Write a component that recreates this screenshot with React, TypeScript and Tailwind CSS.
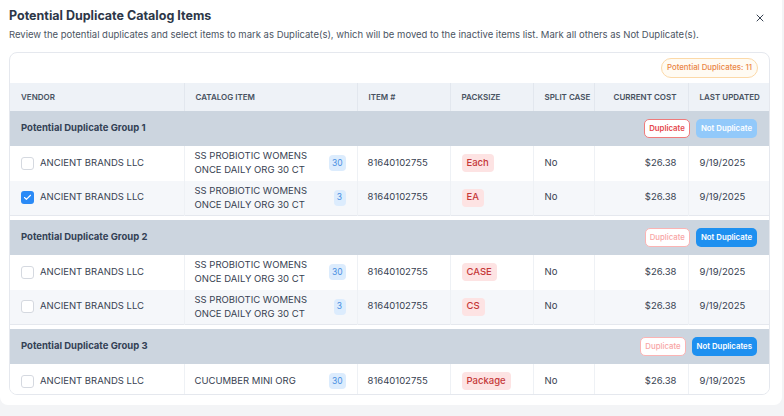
import { Check, X } from "lucide-react";

type Row = {
  vendor: string;
  item: string[];
  count: string;
  itemNo: string;
  pack: string;
  split: string;
  cost: string;
  updated: string;
  checked?: boolean;
};

type Group = {
  name: string;
  dupStyle: "active" | "faded";
  notDupStyle: "faded" | "active";
  notDupLabel: string;
  rows: Row[];
};

const probiotic = ["SS PROBIOTIC WOMENS", "ONCE DAILY ORG 30 CT"];

const groups: Group[] = [
  {
    name: "Potential Duplicate Group 1",
    dupStyle: "active",
    notDupStyle: "faded",
    notDupLabel: "Not Duplicate",
    rows: [
      { vendor: "ANCIENT BRANDS LLC", item: probiotic, count: "30", itemNo: "81640102755", pack: "Each", split: "No", cost: "$26.38", updated: "9/19/2025" },
      { vendor: "ANCIENT BRANDS LLC", item: probiotic, count: "3", itemNo: "81640102755", pack: "EA", split: "No", cost: "$26.38", updated: "9/19/2025", checked: true },
    ],
  },
  {
    name: "Potential Duplicate Group 2",
    dupStyle: "faded",
    notDupStyle: "active",
    notDupLabel: "Not Duplicate",
    rows: [
      { vendor: "ANCIENT BRANDS LLC", item: probiotic, count: "30", itemNo: "81640102755", pack: "CASE", split: "No", cost: "$26.38", updated: "9/19/2025" },
      { vendor: "ANCIENT BRANDS LLC", item: probiotic, count: "3", itemNo: "81640102755", pack: "CS", split: "No", cost: "$26.38", updated: "9/19/2025" },
    ],
  },
  {
    name: "Potential Duplicate Group 3",
    dupStyle: "faded",
    notDupStyle: "active",
    notDupLabel: "Not Duplicates",
    rows: [
      { vendor: "ANCIENT BRANDS LLC", item: ["CUCUMBER MINI ORG"], count: "30", itemNo: "81640102755", pack: "Package", split: "No", cost: "$26.38", updated: "9/19/2025" },
    ],
  },
];

const headers = ["VENDOR", "CATALOG ITEM", "ITEM #", "PACKSIZE", "SPLIT CASE", "CURRENT COST", "LAST UPDATED"];

function Checkbox({ checked }: { checked?: boolean }) {
  if (checked) {
    return (
      <span className="flex h-[13px] w-[13px] shrink-0 items-center justify-center rounded-[3px] bg-[#2a8af6]">
        <Check size={9} strokeWidth={3} className="text-white" />
      </span>
    );
  }
  return <span className="h-[13px] w-[13px] shrink-0 rounded-[3px] border border-[#d5d9e0] bg-white" />;
}

function GroupRows({ group, first }: { group: Group; first: boolean }) {
  return (
    <>
      {!first && (
        <tr className="h-[5px] border-t border-[#e5e8ee] bg-white">
          <td colSpan={7} />
        </tr>
      )}
      <tr className="h-[35px] bg-[#ccd5df]">
        <td colSpan={5} className="pl-[11px] text-[9.5px] font-bold text-[#334155]">
          {group.name}
        </td>
        <td colSpan={2} className="pr-[12px]">
          <div className="flex justify-end gap-[6px]">
            <button
              className={
                group.dupStyle === "active"
                  ? "h-[19px] rounded-[5px] border border-[#f07b7b] bg-white px-[4px] text-[7.8px] font-semibold text-[#e5484d]"
                  : "h-[19px] rounded-[5px] border border-[#fbb4b4] bg-white px-[4px] text-[7.8px] font-medium text-[#f8a5a5]"
              }
            >
              Duplicate
            </button>
            <button
              className={
                group.notDupStyle === "active"
                  ? "h-[19px] rounded-[5px] bg-[#1e90f0] px-[5px] text-[7.8px] font-semibold text-white"
                  : "h-[19px] rounded-[5px] bg-[#92c9fa] px-[5px] text-[7.8px] font-semibold text-white"
              }
            >
              {group.notDupLabel}
            </button>
          </div>
        </td>
      </tr>
      {group.rows.map((r, i) => (
        <tr key={i} className={`h-[34.5px] text-[9.5px] text-[#374151] ${i % 2 === 1 ? "bg-[#f5f7fa]" : "bg-white"}`}>
          <td className="border-r border-[#eef1f5] pl-[11px]">
            <div className="flex items-center gap-[6px]">
              <Checkbox checked={r.checked} />
              <span>{r.vendor}</span>
            </div>
          </td>
          <td className="border-r border-[#eef1f5] pl-[10px] pr-[11px]">
            <div className="flex items-center justify-between">
              <div className="leading-[14px]">
                {r.item.map((l) => (
                  <div key={l}>{l}</div>
                ))}
              </div>
              <span className="flex h-[16px] min-w-[12px] items-center justify-center rounded-[4px] bg-[#dcecfd] px-[3px] text-[8.5px] text-[#4a90e2]">
                {r.count}
              </span>
            </div>
          </td>
          <td className="border-r border-[#eef1f5] pl-[10px]">{r.itemNo}</td>
          <td className="border-r border-[#eef1f5] pl-[11px]">
            <span className="inline-flex h-[18px] items-center rounded-[4px] bg-[#fde3e3] px-[5px] text-[9.5px] font-medium text-[#c53838]">
              {r.pack}
            </span>
          </td>
          <td className="border-r border-[#eef1f5] pl-[11px]">{r.split}</td>
          <td className="border-r border-[#eef1f5] pr-[11px] text-right">{r.cost}</td>
          <td className="pl-[11px]">{r.updated}</td>
        </tr>
      ))}
    </>
  );
}

export default function App() {
  return (
    <div className="h-[416px] w-[784px] overflow-hidden bg-[#f3f4f6]" style={{ fontFamily: "Inter, 'Noto Sans', sans-serif" }}>
      <div className="relative h-[405px] w-[782px] rounded-b-lg bg-white px-[9px] pt-[8px]">
        <button className="absolute right-[16px] top-[12px] text-[#374151]">
          <X size={12} strokeWidth={2} />
        </button>
        <h1 className="text-[12.5px] font-bold leading-[16px] text-[#2d3748]">Potential Duplicate Catalog Items</h1>
        <p className="mt-[4px] text-[9.5px] leading-[14px] text-[#4b5563]">
          Review the potential duplicates and select items to mark as Duplicate(s), which will be moved to the inactive items list. Mark all others as Not Duplicate(s).
        </p>
        <div className="mt-[10px] h-[343px] w-[761px] overflow-hidden rounded-lg border border-[#e5e8ee]">
          <div className="flex h-[30px] items-start justify-end pr-[11px] pt-[5px]">
            <span className="flex h-[20px] items-center rounded-full border border-[#fcd9a8] bg-[#fffbf3] px-[5px] text-[7.8px] font-medium text-[#ea8545]">
              Potential Duplicates: 11
            </span>
          </div>
          <table className="w-full table-fixed border-collapse">
            <colgroup>
              <col className="w-[174px]" />
              <col className="w-[173px]" />
              <col className="w-[93px]" />
              <col className="w-[83px]" />
              <col className="w-[61px]" />
              <col className="w-[94px]" />
              <col />
            </colgroup>
            <thead>
              <tr className="h-[28px] bg-[#eef2f7]">
                {headers.map((h, i) => (
                  <th
                    key={h}
                    className={`text-[8px] font-semibold text-[#475160] ${i === 5 ? "pr-[11px] text-right" : "pl-[11px] text-left"} ${i < 6 ? "border-r border-[#e2e7ee]" : ""} ${i === 1 || i === 2 ? "pl-[10px]" : ""}`}
                  >
                    {h}
                  </th>
                ))}
              </tr>
            </thead>
            <tbody>
              {groups.map((g, i) => (
                <GroupRows key={g.name} group={g} first={i === 0} />
              ))}
            </tbody>
          </table>
        </div>
      </div>
    </div>
  );
}
